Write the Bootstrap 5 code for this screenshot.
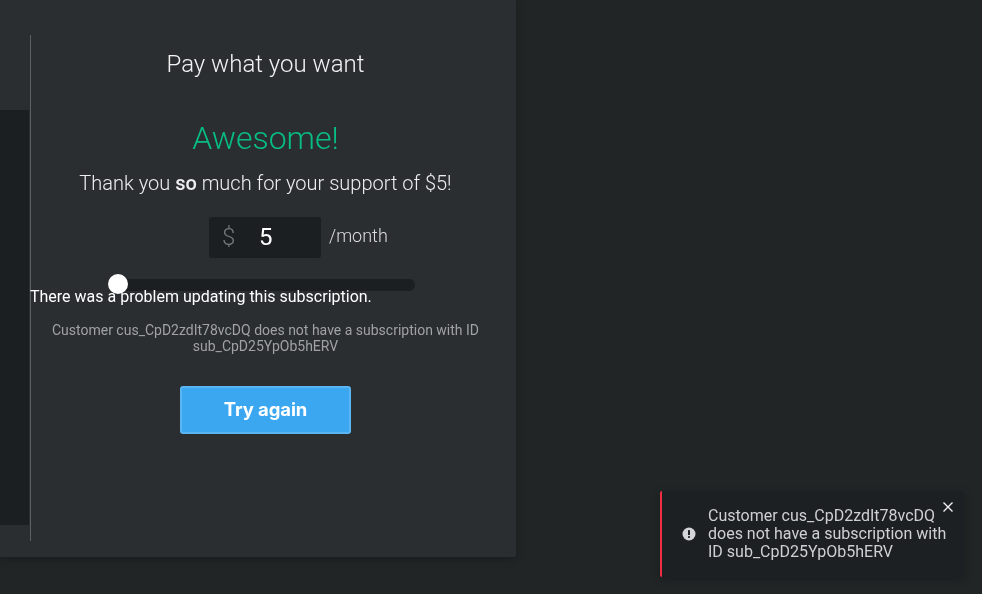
<!DOCTYPE html>
<html lang="en">
<head>
<meta charset="utf-8">
<title>Pay what you want</title>
<link rel="stylesheet" href="https://cdn.jsdelivr.net/npm/bootstrap@5.3.0/dist/css/bootstrap.min.css">
<style>
html,body{height:100%;margin:0;overflow:hidden}
body{background:#212526;font-family:Roboto,"Liberation Sans",sans-serif;color:#fff}
.pay-panel{width:516px;height:557px;background:#2a2e31;box-shadow:0 2px 8px rgba(0,0,0,.25);border-bottom-right-radius:2px;padding-top:35px}
.side-col{width:30px;flex:none;padding-top:75px}
.side-block{width:29px;height:415px;background:#1c1f21}
.main-col{width:470px;height:506px;border-left:1px solid #5d6063;flex:none;will-change:opacity}
.pay-title{font-size:24px;font-weight:300;line-height:28px;color:#f2f2f2;text-align:center;padding-top:15px;margin:0}
.pay-awesome{font-size:32px;font-weight:300;line-height:38px;color:#08bd83;text-align:center;margin:41px 0 0}
.pay-thanks{font-size:20px;font-weight:300;line-height:24px;color:#eee;text-align:center;margin:14px 0 0}
.pay-thanks strong{font-weight:500}
.amount-row{margin-top:22px;height:41px;padding-left:178px}
.amount-box{width:112px;height:41px;background:#1c1f21;border-radius:3px}
.amount-sign{font-size:24px;font-weight:300;color:#75787a;width:51px;padding-left:13px;line-height:41px}
.amount-val{font-size:24px;font-weight:400;color:#fff;line-height:41px;margin-left:-1px}
.amount-per{font-size:18px;font-weight:300;color:#ddd;margin-left:8px;line-height:24px;padding-bottom:3px}
.slider-wrap{position:relative;height:12px;margin:21px 0 0 77px;width:307px}
.slider-track{height:12px;background:#1c1f21;border-radius:6px}
.slider-thumb{position:absolute;left:0;top:-5px;width:20px;height:20px;border-radius:50%;background:#fff;z-index:2}
.err-title{font-size:16px;line-height:19px;margin:-4px 0 0 -1px;color:#fff;position:relative}
.err-detail{font-size:14px;line-height:16px;color:#a0a2a4;text-align:center;margin:16px 0 0;padding:0 15px}
.retry-btn{display:block;width:171px;height:48px;margin:32px auto 0;padding:0;background:#3aa7f0;border:2px solid #5ab5f3;border-radius:3px;color:#fff;font-family:Inter,sans-serif;font-weight:700;font-size:18.5px;letter-spacing:-.1px}
.retry-btn:hover{background:#3aa7f0;border-color:#5ab5f3;color:#fff}
.err-toast{position:fixed;left:660px;top:491px;width:304px;height:86px;background:#1d2022;border-left:2px solid #ee2e42;border-radius:2px;box-shadow:0 2px 8px rgba(0,0,0,.25);color:#cfd0d1;font-size:16px;line-height:18px;will-change:opacity}
.toast-ico{margin-left:20px;width:14px;flex:none}
.toast-msg{margin-left:12px;width:245px}
.toast-x{position:absolute;right:10px;top:10px;width:12px;height:12px}
</style>
</head>
<body>
<div class="pay-panel d-flex">
  <div class="side-col"><div class="side-block"></div></div>
  <div class="main-col">
    <h1 class="pay-title">Pay what you want</h1>
    <h2 class="pay-awesome">Awesome!</h2>
    <p class="pay-thanks">Thank you <strong>so</strong> much for your support of $5!</p>
    <div class="amount-row d-flex align-items-center">
      <div class="amount-box d-flex"><span class="amount-sign">$</span><span class="amount-val">5</span></div>
      <span class="amount-per">/month</span>
    </div>
    <div class="slider-wrap"><div class="slider-track"></div><div class="slider-thumb"></div></div>
    <p class="err-title">There was a problem updating this subscription.</p>
    <p class="err-detail">Customer cus_CpD2zdIt78vcDQ does not have a subscription with ID sub_CpD25YpOb5hERV</p>
    <button type="button" class="btn retry-btn">Try again</button>
  </div>
</div>
<div class="err-toast d-flex align-items-center">
  <svg class="toast-ico" viewBox="0 0 14 14" height="14"><circle cx="7" cy="7" r="6.5" fill="#d4d5d6"/><rect x="6" y="3" width="2" height="5" rx=".6" fill="#1d2022"/><rect x="6" y="9" width="2" height="2" rx=".8" fill="#1d2022"/></svg>
  <div class="toast-msg">Customer cus_CpD2zdIt78vcDQ does not have a subscription with ID sub_CpD25YpOb5hERV</div>
  <svg class="toast-x" viewBox="0 0 12 12"><path d="M1.5 1.5l9 9M10.5 1.5l-9 9" stroke="#f0f0f0" stroke-width="1.4" fill="none"/></svg>
</div>
<script src="https://cdn.jsdelivr.net/npm/bootstrap@5.3.0/dist/js/bootstrap.bundle.min.js"></script>
</body>
</html>
